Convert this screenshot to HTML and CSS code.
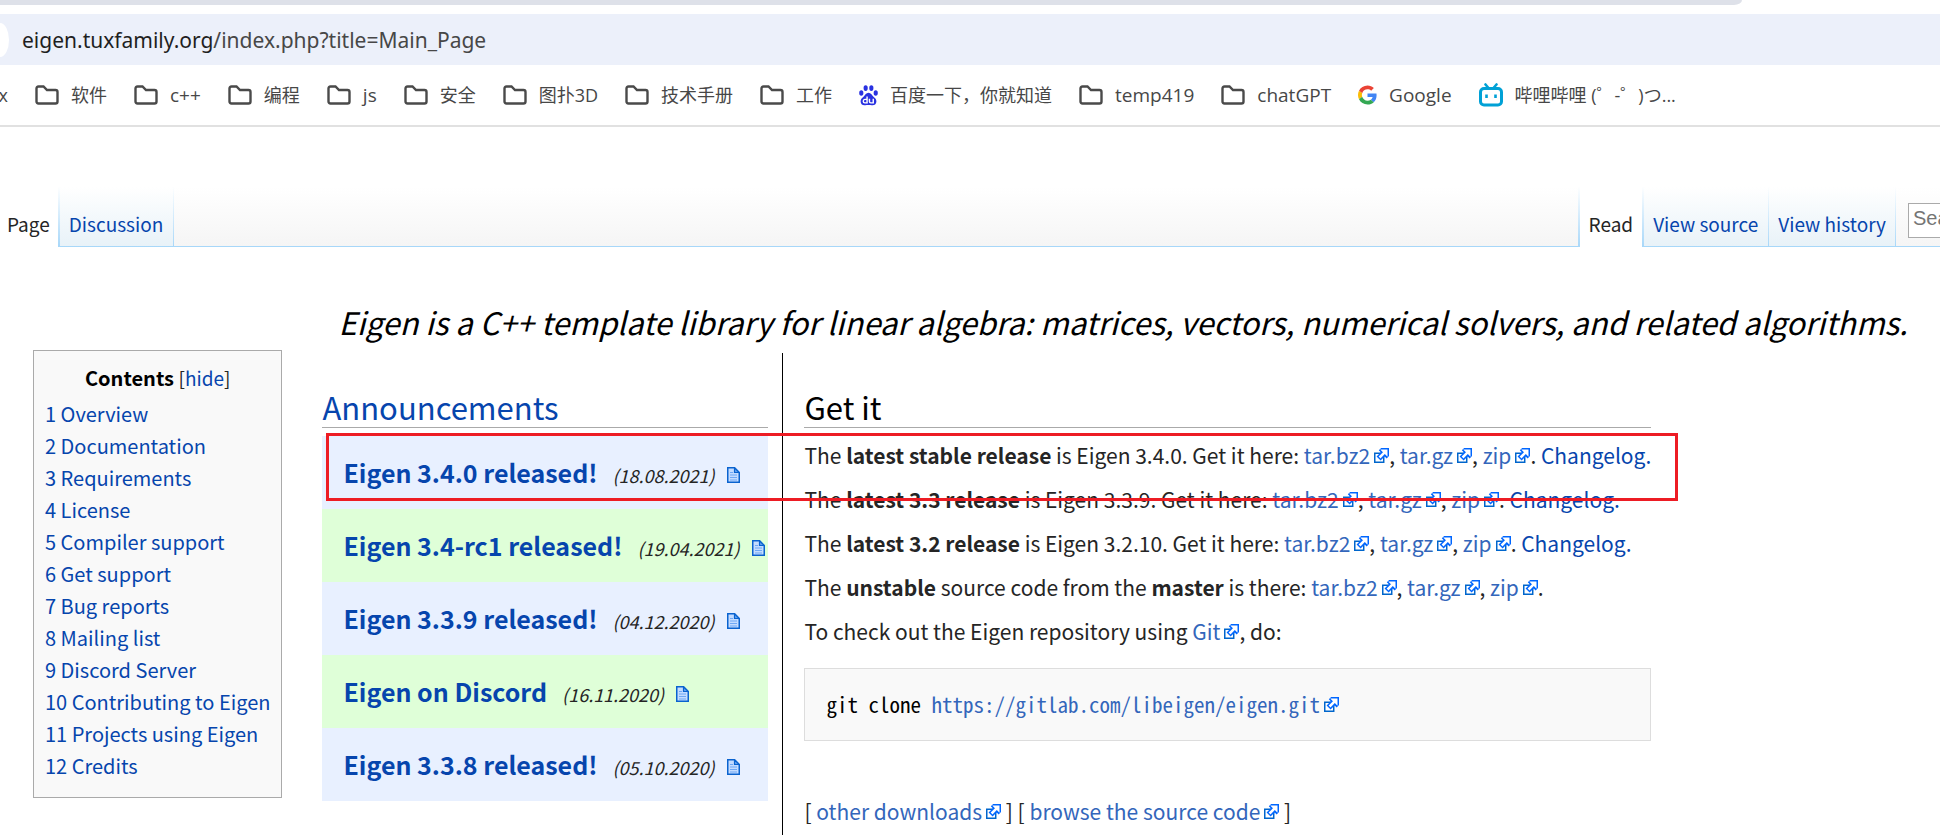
FILE: index.html
```html
<!DOCTYPE html>
<html lang="en">
<head>
<meta charset="utf-8">
<title>Eigen</title>
<link rel="stylesheet" href="styles.css">
</head>
<body>
<svg class="defs" aria-hidden="true">
  <symbol id="folder" viewBox="0 0 24 20"><path d="M3.500 1.500H8.500L12 5H20.500Q22.500 5 22.500 7V16.500Q22.500 18.500 20.500 18.500H3.500Q1.500 18.500 1.500 16.500V3.500Q1.500 1.500 3.500 1.500Z" fill="none" stroke="#4a4a4a" stroke-width="2.400"/></symbol>
  <symbol id="ext" viewBox="1 1 10 10"><path fill="#fff" stroke="#06c" d="M1.500 4.518h5.982V10.500H1.500z"/><path d="M5.765 1H11v5.390L9.427 7.937l-1.310-1.310L5.393 9.350l-2.690-2.688 2.810-2.808L4.200 2.544z" fill="#06f"/><path d="m9.995 2.004.022 4.885L8.200 5.070 5.320 7.950 4.090 6.723l2.882-2.880-1.850-1.852z" fill="#fff"/></symbol>
  <symbol id="doc" viewBox="0 0 13 16"><path d="M.75.75H7.500L12.250 5.500V15.250H.75Z" fill="#c4dcff" stroke="#0a63cf" stroke-width="1.500"/><path d="M7.500.75V5.500H12.250Z" fill="#5fa0f0" stroke="#0a63cf" stroke-width="1.200"/><path d="M3 5.500H6M3 8H10M3 10.500H10M3 13H10" stroke="#6fa8f5" stroke-width="1.200"/></symbol>
</svg>

<div class="tabstrip"><div class="tabstrip-fill"></div></div>
<div class="omnibox"><span class="site-info"></span><span class="url"><b>eigen.tuxfamily.org</b>/index.php?title=Main_Page</span></div>
<nav class="bookmarks">
  <a href="#" class="cut">x</a>
  <a href="#"><svg class="fold"><use href="#folder"/></svg>软件</a>
  <a href="#" class="latin"><svg class="fold"><use href="#folder"/></svg>c++</a>
  <a href="#"><svg class="fold"><use href="#folder"/></svg>编程</a>
  <a href="#" class="latin"><svg class="fold"><use href="#folder"/></svg>js</a>
  <a href="#"><svg class="fold"><use href="#folder"/></svg>安全</a>
  <a href="#"><svg class="fold"><use href="#folder"/></svg>图扑3D</a>
  <a href="#"><svg class="fold"><use href="#folder"/></svg>技术手册</a>
  <a href="#"><svg class="fold"><use href="#folder"/></svg>工作</a>
  <a href="#"><svg class="fav" viewBox="0 0 20 22"><g fill="#2932e1"><ellipse cx="2.400" cy="9" rx="2.200" ry="2.900"/><ellipse cx="7" cy="3.700" rx="2.200" ry="3"/><ellipse cx="13" cy="3.700" rx="2.200" ry="3"/><ellipse cx="17.600" cy="9" rx="2.200" ry="2.900"/><path d="M10 8.500C7.500 8.500 6.500 11 5 12.500C3 14.300 1.500 15.500 1.700 18C2 21 4 22 6.500 21.700C9 21.300 11 21.300 13.500 21.700C16 22 18 21 18.300 18C18.500 15.500 17 14.300 15 12.500C13.500 11 12.500 8.500 10 8.500Z"/></g><path d="M8.500 12.500V19.300H6.200Q4.500 19.300 4.500 17.500T6.200 15.600H8.500M11 15V17.800Q11 19.300 12.500 19.300H15V15" fill="none" stroke="#fff" stroke-width="1.500"/></svg>百度一下，你就知道</a>
  <a href="#" class="latin"><svg class="fold"><use href="#folder"/></svg>temp419</a>
  <a href="#" class="latin"><svg class="fold"><use href="#folder"/></svg>chatGPT</a>
  <a href="#" class="latin"><svg class="fav" viewBox="0 0 48 48"><path fill="#ea4335" d="M24 9.500c3.540 0 6.710 1.220 9.210 3.600l6.850-6.850C35.900 2.380 30.470 0 24 0 14.620 0 6.510 5.380 2.560 13.220l7.980 6.190C12.430 13.720 17.740 9.500 24 9.500z"/><path fill="#4285f4" d="M46.980 24.550c0-1.570-.15-3.090-.38-4.550H24v9.020h12.940c-.58 2.960-2.260 5.480-4.780 7.180l7.730 6c4.510-4.180 7.090-10.360 7.090-17.650z"/><path fill="#fbbc05" d="M10.530 28.590c-.48-1.450-.76-2.990-.76-4.590s.27-3.140.76-4.590l-7.980-6.190C.92 16.460 0 20.120 0 24s.92 7.540 2.560 10.780l7.970-6.190z"/><path fill="#34a853" d="M24 48c6.480 0 11.930-2.130 15.890-5.810l-7.730-6c-2.150 1.450-4.920 2.300-8.160 2.300-6.260 0-11.570-4.220-13.470-9.910l-7.980 6.190C6.510 42.620 14.620 48 24 48z"/></svg>Google</a>
  <a href="#"><svg class="bili" viewBox="0 0 24 24"><path d="M6.500 1.500L9.500 5M17.500 1.500L14.500 5" stroke="#00a1d6" stroke-width="2.600" stroke-linecap="round"/><rect x="1.500" y="5.500" width="21" height="16.500" rx="3.500" fill="none" stroke="#00a1d6" stroke-width="3"/><path d="M7.500 11.500V15M16.500 11.500V15" stroke="#00a1d6" stroke-width="2.600"/></svg>哔哩哔哩 (゜-゜)つ...</a>
</nav>

<header class="head">
  <a href="#" class="tab on">Page</a>
  <a href="#" class="tab edge first">Discussion</a>
  <span class="space"></span>
  <a href="#" class="tab edge on read">Read</a>
  <a href="#" class="tab edge first">View source</a>
  <a href="#" class="tab edge">View history</a>
  <span class="searchbox"><input type="search" class="search" placeholder="Search" aria-label="Search"></span>
</header>

<main class="main">
  <aside class="toc">
    <h2>Contents <span>[<a href="#">hide</a>]</span></h2>
    <ul>
      <li><a href="#">1 Overview</a></li>
      <li><a href="#">2 Documentation</a></li>
      <li><a href="#">3 Requirements</a></li>
      <li><a href="#">4 License</a></li>
      <li><a href="#">5 Compiler support</a></li>
      <li><a href="#">6 Get support</a></li>
      <li><a href="#">7 Bug reports</a></li>
      <li><a href="#">8 Mailing list</a></li>
      <li><a href="#">9 Discord Server</a></li>
      <li><a href="#">10 Contributing to Eigen</a></li>
      <li><a href="#">11 Projects using Eigen</a></li>
      <li><a href="#">12 Credits</a></li>
    </ul>
  </aside>
  <div class="body">
    <p class="lead">Eigen is a C++ template library for linear algebra: matrices, vectors, numerical solvers, and related algorithms.</p>
    <div class="cols">
      <section class="news">
        <h1><a href="#">Announcements</a></h1>
        <div class="item"><a href="#">Eigen 3.4.0 released!</a><i>(18.08.2021)</i><svg class="doc"><use href="#doc"/></svg></div>
        <div class="item"><a href="#">Eigen 3.4-rc1 released!</a><i>(19.04.2021)</i><svg class="doc"><use href="#doc"/></svg></div>
        <div class="item"><a href="#">Eigen 3.3.9 released!</a><i>(04.12.2020)</i><svg class="doc"><use href="#doc"/></svg></div>
        <div class="item"><a href="#">Eigen on Discord</a><i>(16.11.2020)</i><svg class="doc"><use href="#doc"/></svg></div>
        <div class="item"><a href="#">Eigen 3.3.8 released!</a><i>(05.10.2020)</i><svg class="doc"><use href="#doc"/></svg></div>
        <div class="mark"></div>
      </section>
      <section class="get">
        <h1>Get it</h1>
        <p>The <b>latest stable release</b> is Eigen 3.4.0. Get it here: <a class="x" href="#">tar.bz2<svg><use href="#ext"/></svg></a>, <a class="x" href="#">tar.gz<svg><use href="#ext"/></svg></a>, <a class="x" href="#">zip<svg><use href="#ext"/></svg></a>. <a href="#">Changelog.</a></p>
        <p>The <b>latest 3.3 release</b> is Eigen 3.3.9. Get it here: <a class="x" href="#">tar.bz2<svg><use href="#ext"/></svg></a>, <a class="x" href="#">tar.gz<svg><use href="#ext"/></svg></a>, <a class="x" href="#">zip<svg><use href="#ext"/></svg></a>. <a href="#">Changelog.</a></p>
        <p>The <b>latest 3.2 release</b> is Eigen 3.2.10. Get it here: <a class="x" href="#">tar.bz2<svg><use href="#ext"/></svg></a>, <a class="x" href="#">tar.gz<svg><use href="#ext"/></svg></a>, <a class="x" href="#">zip<svg><use href="#ext"/></svg></a>. <a href="#">Changelog.</a></p>
        <p>The <b>unstable</b> source code from the <b>master</b> is there: <a class="x" href="#">tar.bz2<svg><use href="#ext"/></svg></a>, <a class="x" href="#">tar.gz<svg><use href="#ext"/></svg></a>, <a class="x" href="#">zip<svg><use href="#ext"/></svg></a>.</p>
        <p>To check out the Eigen repository using <a class="x" href="#">Git<svg><use href="#ext"/></svg></a>, do:</p>
        <pre>git clone <a class="x" href="#">https://gitlab.com/libeigen/eigen.git<svg><use href="#ext"/></svg></a></pre>
        <p>[ <a class="x" href="#">other downloads<svg><use href="#ext"/></svg></a> ] [ <a class="x" href="#">browse the source code<svg><use href="#ext"/></svg></a> ]</p>
      </section>
    </div>
  </div>
</main>
</body>
</html>
```
FILE: styles.css
```css
* { box-sizing: border-box; }
html { height: 100%; }
body {
  margin: 0;
  height: 100%;
  display: flex;
  flex-direction: column;
  overflow: hidden;
  background: #fff;
  color: #252525;
  font: 21px/32px "Noto Sans CJK SC", sans-serif;
  white-space: nowrap;
}
a { color: #0645ad; text-decoration: none; }
.defs { display: none; }

/* browser chrome */
.tabstrip, .omnibox, .bookmarks, .head { flex-shrink: 0; }
.tabstrip { padding-right: 198px; }
.tabstrip-fill { height: 5px; background: #dee1e9; border-bottom-right-radius: 8px 5px; }
.omnibox {
  display: flex;
  align-items: center;
  gap: 13px;
  height: 51px;
  margin-top: 9px;
  background: #ecf0fa;
  overflow: hidden;
  color: #474747;
  font: 21px/32px "Noto Sans", "Open Sans", sans-serif;
}
.omnibox b { color: #1f1f1f; font-weight: 400; }
.site-info { width: 9px; height: 34px; background: #fff; border-radius: 0 9px 9px 0 / 0 17px 17px 0; }
.bookmarks {
  display: flex;
  align-items: center;
  gap: 27px;
  height: 62px;
  border-bottom: 2px solid #e1e1e1;
  font: 18px/28px "Open Sans", "Noto Sans CJK SC", sans-serif;
}
.bookmarks a { display: flex; align-items: center; gap: 12px; color: #474747; }
.bookmarks .cut { width: 8px; justify-content: flex-end; }
.bookmarks .latin { font-size: 19px; }
.fold { width: 24px; height: 20px; }
.fav { width: 19px; height: 22px; }
.bili { width: 24px; height: 24px; }

/* page tabs */
.head {
  display: flex;
  height: 60px;
  margin-top: 60px;
  background: linear-gradient(#fff, #f5f5f5);
  border-bottom: 1px solid #a7d7f9;
  font-size: 19px;
  line-height: 30px;
}
.tab {
  height: 60px;
  padding: 22px 9px 0;
  background: linear-gradient(#fff, #e8f2f8);
  border-bottom: 1px solid #a7d7f9;
}
.tab.on { background: #fff; border-bottom-color: #fff; color: #252525; }
.tab.on:first-child { padding-left: 7px; padding-right: 8px; }
.edge { border-right: 1px solid; border-image: linear-gradient(#fff, #a7d7f9) 1; }
.edge.first { border-left: 2px solid; padding-right: 10px; }
.edge.read { border-left: 2px solid; border-right: 0; border-bottom: 0; }
.space { flex: 1; }
.searchbox { width: 44px; padding: 16px 0 0 12px; overflow: hidden; }
.search {
  display: block;
  width: 240px;
  height: 35px;
  padding: 0 4px 4px;
  border: 1px solid #aaa;
  background: #fff;
  color: #757575;
  font: 20px "Liberation Sans", sans-serif;
}

/* article */
.main { flex: 1; display: flex; align-items: flex-start; gap: 40px; padding-left: 33px; }
.toc {
  margin-top: 103px;
  padding: 11px 11px 15px;
  border: 1px solid #aaa;
  background: #f9f9f9;
  font-size: 20px;
}
.toc h2 { margin: 0 0 4px; color: #000; font-size: 20px; line-height: 32px; text-align: center; }
.toc h2 span { color: #252525; font-size: 19px; font-weight: 400; }
.toc ul { margin: 0; padding: 0; list-style: none; }
.body { align-self: stretch; flex: 1; display: flex; flex-direction: column; }
.lead { margin: 50px 0 6px; padding-left: 16px; color: #000; font-size: 31px; font-style: italic; line-height: 50px; }
.cols { flex: 1; display: flex; }
.news { position: relative; padding: 34px 14px 0 0; border-right: 1px solid #000; width: 461px; }
.get { padding: 34px 0 0 21px; }
h1 { margin: 0; border-bottom: 1px solid #aaa; color: #000; font-size: 31px; font-weight: 400; line-height: 40px; }
.news h1 { margin-bottom: 8px; }
.item {
  display: flex;
  align-items: baseline;
  height: 73px;
  padding: 16px 0 0 21px;
  background: #e8f0ff;
}
.item:nth-child(odd) { background: #dfffd8; }
.item a { font-size: 25px; font-weight: 700; line-height: 40px; }
.item i { margin: 0 12px 0 15px; font-size: 18px; }
.doc { width: 13px; height: 16px; margin-bottom: -2px; }
.mark { position: absolute; z-index: 1; left: 4px; top: 80px; width: 1352px; height: 68px; border: 3px solid #ed1c24; }
.get p { margin: 12px 0; }
.get h1 + p { margin-top: 11px; }
.get .x { color: #36b; }
.x svg { width: 15px; height: 15px; margin-left: 4px; vertical-align: 1px; }
pre {
  margin: 21px 0 54px;
  padding: 19px 21px;
  border: 1px solid #ddd;
  background: #f9f9f9;
  color: #000;
  font: 21px/33px "Noto Sans Mono CJK SC", "Liberation Mono", monospace;
}
```
